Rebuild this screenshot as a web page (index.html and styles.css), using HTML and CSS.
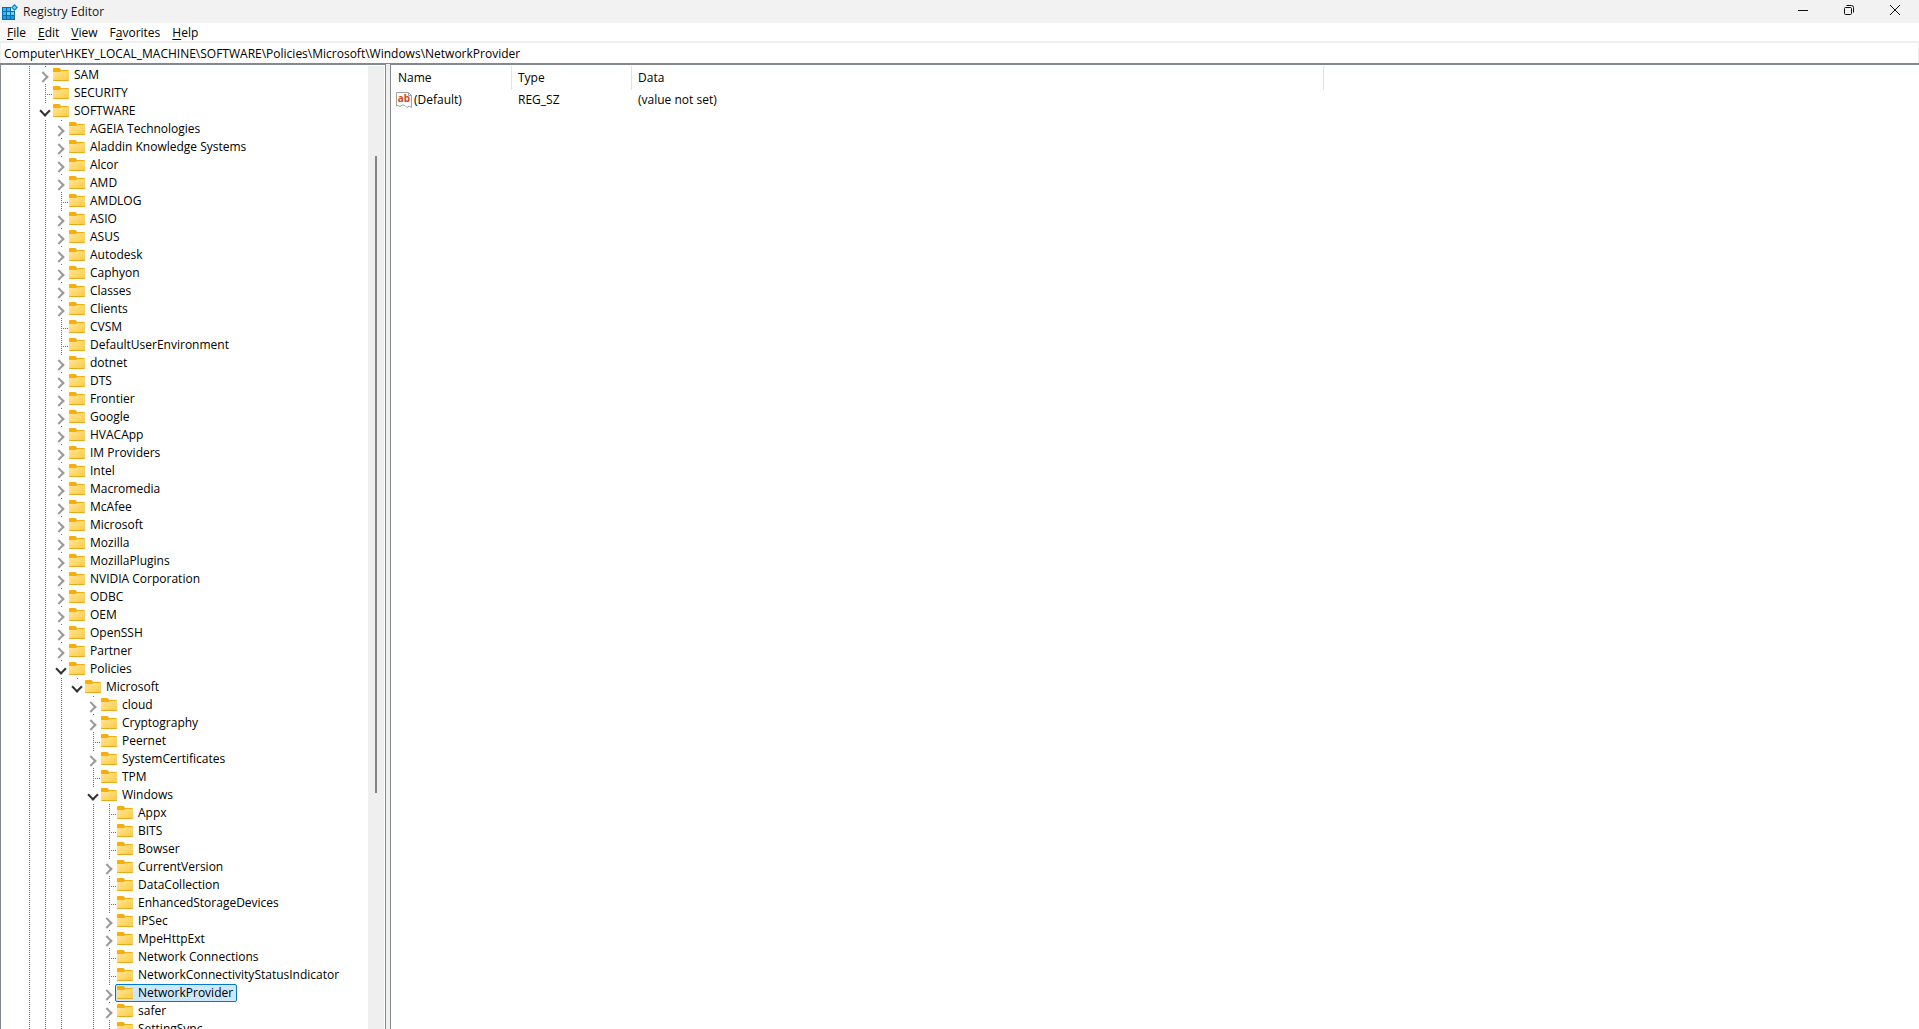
FILE: index.html
```html
<!DOCTYPE html>
<html lang="en">
<head>
<meta charset="utf-8">
<title>Registry Editor</title>
<link rel="stylesheet" href="styles.css">
</head>
<body>
<svg class="defs" aria-hidden="true">
  <linearGradient id="front" x1="0" y1="0" x2="1" y2="1">
    <stop offset="0" stop-color="#ffe69c"/><stop offset="1" stop-color="#ffca3c"/>
  </linearGradient>
  <symbol id="folder" viewBox="0 0 16 16">
    <path fill="#f5ae0b" d="M0 2Q0 1 1 1H6Q7 1 7.500 2L8 3H15Q16 3 16 4V7H0Z"/>
    <path fill="url(#front)" d="M0 5H7L8.500 4H16V13Q16 14 15 14H1Q0 14 0 13Z"/>
    <path fill="#eba91c" d="M0 13H16Q16 14 15 14H1Q0 14 0 13Z"/>
  </symbol>
</svg>

<header class="titlebar">
  <svg class="app-icon" viewBox="0 0 16 16" aria-hidden="true">
    <path fill="#0b6cab" d="M0 3H9V7H13V16H0Z"/>
    <path fill="#35b8f0" d="M1 4H4V7H1ZM5 4H8V7H5ZM1 8H4V11H1Z"/>
    <path fill="#5ed3fb" d="M5 8H8V11H5ZM9 8H12V11H9Z"/>
    <path fill="#1d9bdc" d="M1 12H4V15H1ZM5 12H8V15H5ZM9 12H12V15H9Z"/>
    <path fill="#1583c4" d="M12.500 0L16 3.500L12.500 7L9 3.500Z"/>
    <path fill="#6fd6fb" d="M12.500 1.700L14.300 3.500L12.500 5.300L10.700 3.500Z"/>
  </svg>
  <h1>Registry Editor</h1>
  <div class="window-buttons">
    <button type="button" aria-label="Minimize"><svg viewBox="0 0 12 12"><path d="M1 6.500H11"/></svg></button>
    <button type="button" aria-label="Restore"><svg viewBox="0 0 12 12"><rect x="1.500" y="3.500" width="7" height="7" rx="1"/><path d="M3.500 1.500H8.500Q10.500 1.500 10.500 3.500V8.500"/></svg></button>
    <button type="button" aria-label="Close"><svg viewBox="0 0 12 12"><path d="M1 1L11 11M11 1L1 11"/></svg></button>
  </div>
</header>

<nav class="menubar" aria-label="Menu">
  <button type="button" class="hot"><u>F</u>ile</button>
  <button type="button"><u>E</u>dit</button>
  <button type="button"><u>V</u>iew</button>
  <button type="button">F<u>a</u>vorites</button>
  <button type="button"><u>H</u>elp</button>
</nav>

<div class="address">
  <input type="text" aria-label="Address" value="Computer\HKEY_LOCAL_MACHINE\SOFTWARE\Policies\Microsoft\Windows\NetworkProvider">
</div>

<main class="panes">
  <nav class="tree" aria-label="Keys">
    <ul class="root">
      <li>
        <ul>
          <li><button class="toggle" aria-label="Expand"></button><button class="key"><svg><use href="#folder"/></svg>SAM</button></li>
          <li><button class="key"><svg><use href="#folder"/></svg>SECURITY</button></li>
          <li><button class="toggle open" aria-label="Collapse"></button><button class="key"><svg><use href="#folder"/></svg>SOFTWARE</button>
            <ul>
              <li><button class="toggle" aria-label="Expand"></button><button class="key"><svg><use href="#folder"/></svg>AGEIA Technologies</button></li>
              <li><button class="toggle" aria-label="Expand"></button><button class="key"><svg><use href="#folder"/></svg>Aladdin Knowledge Systems</button></li>
              <li><button class="toggle" aria-label="Expand"></button><button class="key"><svg><use href="#folder"/></svg>Alcor</button></li>
              <li><button class="toggle" aria-label="Expand"></button><button class="key"><svg><use href="#folder"/></svg>AMD</button></li>
              <li><button class="key"><svg><use href="#folder"/></svg>AMDLOG</button></li>
              <li><button class="toggle" aria-label="Expand"></button><button class="key"><svg><use href="#folder"/></svg>ASIO</button></li>
              <li><button class="toggle" aria-label="Expand"></button><button class="key"><svg><use href="#folder"/></svg>ASUS</button></li>
              <li><button class="toggle" aria-label="Expand"></button><button class="key"><svg><use href="#folder"/></svg>Autodesk</button></li>
              <li><button class="toggle" aria-label="Expand"></button><button class="key"><svg><use href="#folder"/></svg>Caphyon</button></li>
              <li><button class="toggle" aria-label="Expand"></button><button class="key"><svg><use href="#folder"/></svg>Classes</button></li>
              <li><button class="toggle" aria-label="Expand"></button><button class="key"><svg><use href="#folder"/></svg>Clients</button></li>
              <li><button class="key"><svg><use href="#folder"/></svg>CVSM</button></li>
              <li><button class="key"><svg><use href="#folder"/></svg>DefaultUserEnvironment</button></li>
              <li><button class="toggle" aria-label="Expand"></button><button class="key"><svg><use href="#folder"/></svg>dotnet</button></li>
              <li><button class="toggle" aria-label="Expand"></button><button class="key"><svg><use href="#folder"/></svg>DTS</button></li>
              <li><button class="toggle" aria-label="Expand"></button><button class="key"><svg><use href="#folder"/></svg>Frontier</button></li>
              <li><button class="toggle" aria-label="Expand"></button><button class="key"><svg><use href="#folder"/></svg>Google</button></li>
              <li><button class="toggle" aria-label="Expand"></button><button class="key"><svg><use href="#folder"/></svg>HVACApp</button></li>
              <li><button class="toggle" aria-label="Expand"></button><button class="key"><svg><use href="#folder"/></svg>IM Providers</button></li>
              <li><button class="toggle" aria-label="Expand"></button><button class="key"><svg><use href="#folder"/></svg>Intel</button></li>
              <li><button class="toggle" aria-label="Expand"></button><button class="key"><svg><use href="#folder"/></svg>Macromedia</button></li>
              <li><button class="toggle" aria-label="Expand"></button><button class="key"><svg><use href="#folder"/></svg>McAfee</button></li>
              <li><button class="toggle" aria-label="Expand"></button><button class="key"><svg><use href="#folder"/></svg>Microsoft</button></li>
              <li><button class="toggle" aria-label="Expand"></button><button class="key"><svg><use href="#folder"/></svg>Mozilla</button></li>
              <li><button class="toggle" aria-label="Expand"></button><button class="key"><svg><use href="#folder"/></svg>MozillaPlugins</button></li>
              <li><button class="toggle" aria-label="Expand"></button><button class="key"><svg><use href="#folder"/></svg>NVIDIA Corporation</button></li>
              <li><button class="toggle" aria-label="Expand"></button><button class="key"><svg><use href="#folder"/></svg>ODBC</button></li>
              <li><button class="toggle" aria-label="Expand"></button><button class="key"><svg><use href="#folder"/></svg>OEM</button></li>
              <li><button class="toggle" aria-label="Expand"></button><button class="key"><svg><use href="#folder"/></svg>OpenSSH</button></li>
              <li><button class="toggle" aria-label="Expand"></button><button class="key"><svg><use href="#folder"/></svg>Partner</button></li>
              <li><button class="toggle open" aria-label="Collapse"></button><button class="key"><svg><use href="#folder"/></svg>Policies</button>
                <ul>
                  <li class="end"><button class="toggle open" aria-label="Collapse"></button><button class="key"><svg><use href="#folder"/></svg>Microsoft</button>
                    <ul>
                      <li><button class="toggle" aria-label="Expand"></button><button class="key"><svg><use href="#folder"/></svg>cloud</button></li>
                      <li><button class="toggle" aria-label="Expand"></button><button class="key"><svg><use href="#folder"/></svg>Cryptography</button></li>
                      <li><button class="key"><svg><use href="#folder"/></svg>Peernet</button></li>
                      <li><button class="toggle" aria-label="Expand"></button><button class="key"><svg><use href="#folder"/></svg>SystemCertificates</button></li>
                      <li><button class="key"><svg><use href="#folder"/></svg>TPM</button></li>
                      <li><button class="toggle open" aria-label="Collapse"></button><button class="key"><svg><use href="#folder"/></svg>Windows</button>
                        <ul>
                          <li><button class="key"><svg><use href="#folder"/></svg>Appx</button></li>
                          <li><button class="key"><svg><use href="#folder"/></svg>BITS</button></li>
                          <li><button class="key"><svg><use href="#folder"/></svg>Bowser</button></li>
                          <li><button class="toggle" aria-label="Expand"></button><button class="key"><svg><use href="#folder"/></svg>CurrentVersion</button></li>
                          <li><button class="key"><svg><use href="#folder"/></svg>DataCollection</button></li>
                          <li><button class="key"><svg><use href="#folder"/></svg>EnhancedStorageDevices</button></li>
                          <li><button class="toggle" aria-label="Expand"></button><button class="key"><svg><use href="#folder"/></svg>IPSec</button></li>
                          <li><button class="toggle" aria-label="Expand"></button><button class="key"><svg><use href="#folder"/></svg>MpeHttpExt</button></li>
                          <li><button class="key"><svg><use href="#folder"/></svg>Network Connections</button></li>
                          <li><button class="key"><svg><use href="#folder"/></svg>NetworkConnectivityStatusIndicator</button></li>
                          <li><button class="toggle" aria-label="Expand"></button><button class="key selected" aria-current="true"><svg><use href="#folder"/></svg>NetworkProvider</button></li>
                          <li><button class="toggle" aria-label="Expand"></button><button class="key"><svg><use href="#folder"/></svg>safer</button></li>
                          <li><button class="key"><svg><use href="#folder"/></svg>SettingSync</button></li>
                        </ul>
                      </li>
                    </ul>
                  </li>
                </ul>
              </li>
            </ul>
          </li>
        </ul>
      </li>
    </ul>
    <div class="scrollbar"><div class="thumb"></div></div>
  </nav>

  <section class="values">
    <table>
      <colgroup><col class="col-name"><col class="col-type"><col class="col-data"><col></colgroup>
      <thead>
        <tr><th scope="col">Name</th><th scope="col">Type</th><th scope="col">Data</th><td></td></tr>
      </thead>
      <tbody>
        <tr>
          <td><span class="value-name"><svg viewBox="0 0 16 16" aria-hidden="true">
            <path fill="#fff" stroke="#a3a3a3" d="M.5 .5H12.500L15.500 3.500V15.500L13 14L11 15.500L9 13.500L6.500 13L4 14.500L2 13.500L.5 14Z"/>
            <path fill="none" stroke="#a3a3a3" d="M12.500 .5V3.500H15.500"/>
            <text x="8" y="10" text-anchor="middle">ab</text>
          </svg>(Default)</span></td>
          <td>REG_SZ</td>
          <td>(value not set)</td>
          <td></td>
        </tr>
      </tbody>
    </table>
  </section>
</main>
</body>
</html>
```
FILE: styles.css
```css
* { box-sizing: border-box; }

body {
  margin: 0;
  height: 100vh;
  display: flex;
  flex-direction: column;
  overflow: hidden;
  background: #fff;
  color: #000;
  font: 12px/18px "Open Sans", "Noto Sans", sans-serif;
}

button {
  margin: 0;
  padding: 0;
  border: 0;
  background: none;
  color: inherit;
  font: inherit;
}

.defs { position: absolute; width: 0; height: 0; }

/* Title bar */
.titlebar {
  display: flex;
  align-items: center;
  height: 23px;
  padding-left: 2px;
  background: #f2f2f2;
}
.app-icon { width: 16px; height: 16px; margin-right: 5px; }
.titlebar h1 { margin: 0; font-size: 12px; font-weight: 400; color: #1a1a1a; }
.window-buttons { display: flex; align-self: flex-start; margin-left: auto; padding-right: 1px; }
.window-buttons button {
  display: flex;
  align-items: center;
  justify-content: center;
  width: 46px;
  height: 20px;
}
.window-buttons svg { width: 12px; height: 12px; fill: none; stroke: #111; }

/* Menu */
.menubar { display: flex; flex: none; }
.menubar button { height: 18px; padding: 1px 6px 0; line-height: 17px; }
.menubar .hot { padding-left: 7px; background: #f9f9f9; }
.menubar u { text-underline-offset: 2px; }

/* Address bar */
.address { flex: none; padding: 2px 1px 0; background: #efefef; border-bottom: 1px solid #828790; }
.address input {
  display: block;
  width: 100%;
  height: 20px;
  padding: 0 3px;
  border: 0;
  background: #fff;
  font: inherit;
  outline: 0;
}

/* Panes */
.panes { display: flex; flex: 1; min-height: 0; background: #f0f0f0; gap: 4px; }
.tree {
  display: flex;
  flex: none;
  width: 386px;
  padding: 1px 1px 0 0;
  overflow: hidden;
  background: #fff;
  border: solid #828790;
  border-width: 1px 1px 0;
}
.values {
  flex: 1;
  min-width: 0;
  padding-top: 1px;
  background: #fff;
  border: solid #828790;
  border-width: 1px 0 0 1px;
}

/* Key tree */
.tree ul { margin: 0; padding: 0 0 0 16px; list-style: none; }
.tree .root { flex: 1; min-width: 0; padding-left: 20px; white-space: nowrap; }
.tree li { position: relative; padding-left: 16px; }
.tree li > ul { padding-left: 0; }
.tree li::before {
  content: "";
  position: absolute;
  left: 8px;
  top: 0;
  width: 1px;
  height: 100%;
  background: repeating-linear-gradient(to bottom, #707070 0 1px, transparent 1px 2px);
}
.tree li.end::before { height: 10px; }
.tree li::after {
  content: "";
  position: absolute;
  left: 8px;
  top: 10px;
  width: 8px;
  height: 1px;
  background: repeating-linear-gradient(to right, #707070 0 1px, transparent 1px 2px);
}
.tree .root > li::after { display: none; }

.toggle {
  position: absolute;
  z-index: 1;
  left: 1px;
  top: 1px;
  width: 15px;
  height: 17px;
  background: #fff;
}
.toggle::before {
  content: "";
  position: absolute;
  left: 1px;
  top: 6px;
  width: 6px;
  height: 6px;
  border: solid #9a9a9a;
  border-width: 2px 2px 0 0;
  transform: rotate(45deg);
}
.toggle.open::before {
  left: 3px;
  top: 4px;
  border-color: #333;
  border-width: 0 2px 2px 0;
}

.key {
  position: relative;
  z-index: 2;
  display: flex;
  align-items: center;
  height: 18px;
  margin-left: -2px;
  padding: 0 3px 0 1px;
  border: 1px solid transparent;
  border-radius: 2px;
  line-height: 16px;
}
.key svg { width: 16px; height: 16px; margin-right: 5px; }
.key.selected { background: #cce8ff; border-color: #0078d4; }

.scrollbar { flex: none; width: 16px; padding: 90px 7px 0; background: #efefef; }
.thumb { height: 73%; max-height: 640px; background: #858585; }

/* Value list */
table { width: 100%; table-layout: fixed; border-collapse: separate; border-spacing: 0; }
.col-name { width: 121px; }
.col-type { width: 120px; }
.col-data { width: 692px; }
th, td { padding: 0 6px; text-align: left; font-weight: 400; }
th { height: 24px; border-right: 1px solid #e2e2e2; }
th:first-child, td:first-child { padding-left: 7px; }
tbody td { height: 20px; }
.value-name { display: flex; align-items: center; gap: 2px; margin-left: -2px; }
.value-name svg { width: 16px; height: 16px; overflow: visible; }
.value-name text { font: 700 10px "Open Sans", sans-serif; fill: #d9431e; }
```
